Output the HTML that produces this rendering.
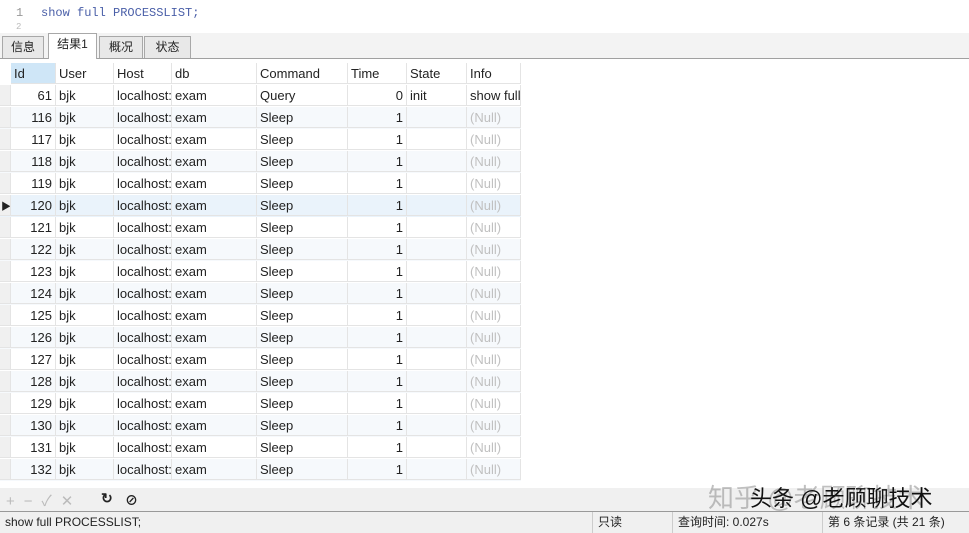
<!DOCTYPE html><html><head><meta charset="utf-8"><style>
body{margin:0;width:969px;height:533px;background:#fff;font-family:"Liberation Sans","Noto Sans CJK SC",sans-serif;font-size:13px;color:#222;position:relative;overflow:hidden}
.ed{position:absolute;left:0;top:0;width:969px;height:30px;font-family:"Liberation Mono",monospace;font-size:12px}
.tabs{position:absolute;top:33px;left:0;width:969px;height:25px;border-bottom:1px solid #a0a0a0;background:#f3f3f3}
.tab{position:absolute;top:3px;height:21px;border:1px solid #a8a8a8;border-bottom:none;background:#e8e8e8;font-size:12px;line-height:21px;text-align:center}
.r{position:absolute;left:0;height:22px;width:521px;line-height:22px}
.c{position:absolute;top:0;height:21px;border-right:1px solid #e4e4e4;border-bottom:1px solid #e4e4e4;padding:0 3px;box-sizing:border-box;white-space:nowrap;overflow:hidden}
.n{color:#c0c0c0}
.tb{position:absolute;top:488px;left:0;width:969px;height:23px;background:#f0f0f0;border-bottom:1px solid #999}
.sb{position:absolute;top:512px;left:0;width:969px;height:21px;background:#f0f0f0;font-size:12px;line-height:21px}
</style></head><body>
<div class="ed"><span style="position:absolute;left:16px;top:6px;color:#999">1</span><span style="position:absolute;left:41px;top:6px;color:#4a5fa8">show full PROCESSLIST;</span><span style="position:absolute;left:16px;top:22px;color:#bbb;font-size:9px">2</span></div>
<div class="tabs">
<div class="tab" style="left:2px;width:40px">信息</div>
<div class="tab" style="left:48px;top:0;height:25px;width:47px;background:#fff">结果1</div>
<div class="tab" style="left:99px;width:42px">概况</div>
<div class="tab" style="left:144px;width:45px">状态</div>
</div>
<div id="g"></div>
<div class="tb"><span style="position:absolute;left:6px;top:2px;color:#bbb;font-size:15px;letter-spacing:9px">+−✓✕</span><span style="position:absolute;left:101px;top:2px;font-weight:bold;font-size:14px">↻</span><span style="position:absolute;left:125px;top:2px;font-weight:bold;font-size:13px">⊘</span>
<span style="position:absolute;left:708px;top:-10px;font-size:26px;color:rgba(150,150,150,.6)">知乎 @老顾聊技术</span></div>
<div class="sb"><span style="position:absolute;left:5px">show full PROCESSLIST;</span>
<span style="position:absolute;left:592px;border-left:1px solid #ccc;padding-left:5px">只读</span>
<span style="position:absolute;left:672px;border-left:1px solid #ccc;padding-left:5px">查询时间: 0.027s</span>
<span style="position:absolute;left:822px;border-left:1px solid #ccc;padding-left:5px">第 6 条记录 (共 21 条)</span>
<span style="position:absolute;left:750px;top:-24px;font-size:22px;color:#111">头条 @老顾聊技术</span></div>
<script>
var cols=[[11,45],[56,58],[114,58],[172,85],[257,91],[348,59],[407,60],[467,54]];
var h='<div class="r" style="top:63px;background:#fff">';
var hd=['Id','User','Host','db','Command','Time','State','Info'];
hd.forEach(function(t,i){h+='<div class="c" style="left:'+cols[i][0]+'px;width:'+cols[i][1]+'px;'+(i==0?'background:#cfe6f7':'')+'">'+t+'</div>'});
h+='</div>';
var ids=[61,116,117,118,119,120,121,122,123,124,125,126,127,128,129,130,131,132];
ids.forEach(function(id,k){var top=85+k*22;var bg=id==120?'#eaf3fb':(k%2?'#f6f9fc':'#fff');
var v=k==0?[id,'bjk','localhost:','exam','Query','0','init','show full']:[id,'bjk','localhost:','exam','Sleep','1','','(Null)'];
h+='<div class="r" style="top:'+top+'px;background:'+bg+'"><div class="c" style="left:0;width:11px;background:#f0f0f0">'+(id==120?'<span style="font-size:10px;margin-left:-2px">▶</span>':'')+'</div>';
v.forEach(function(t,i){var st='left:'+cols[i][0]+'px;width:'+cols[i][1]+'px;';if(i==0||i==5)st+='text-align:right;';
h+='<div class="c'+(t=='(Null)'?' n':'')+'" style="'+st+'">'+t+'</div>'});h+='</div>'});
document.getElementById('g').innerHTML=h;
</script>
</body></html>
